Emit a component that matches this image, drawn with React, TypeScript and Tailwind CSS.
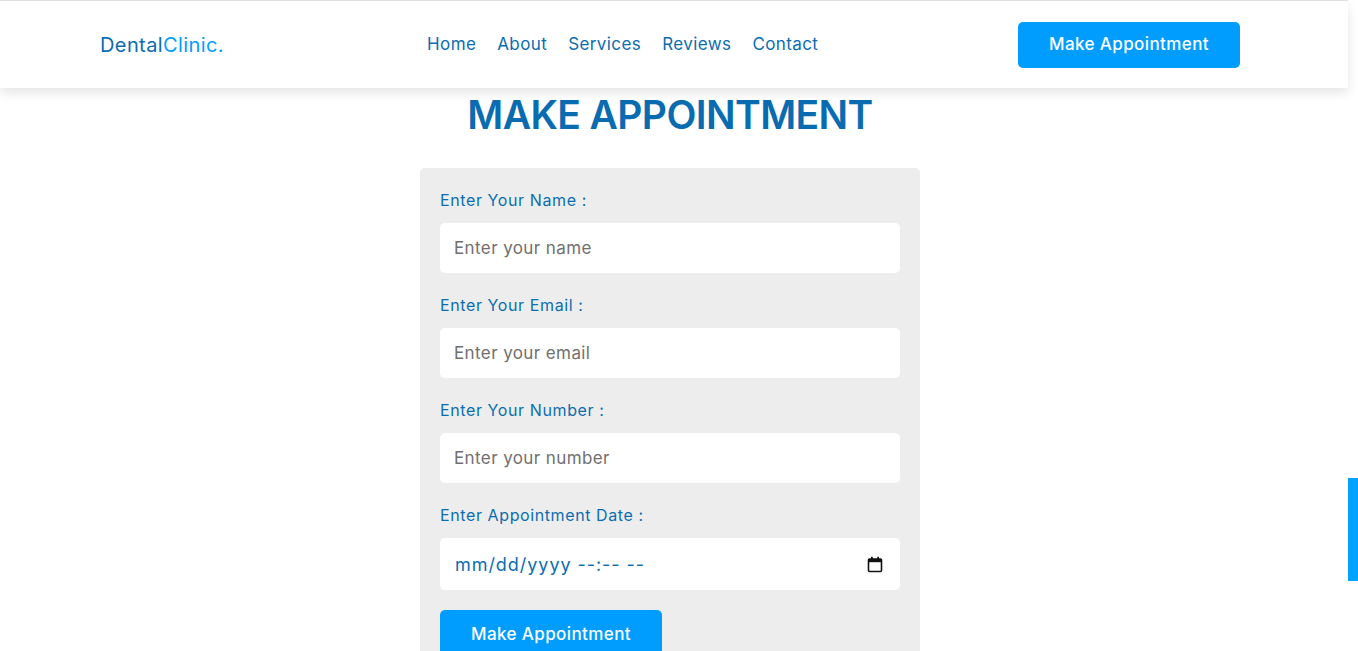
import React from "react";

const font = { fontFamily: '"Inter", "Noto Sans", sans-serif' };

function Field({ label, placeholder, type = "text" }: { label: string; placeholder: string; type?: string }) {
  return (
    <div className="flex shrink-0 flex-col">
      <label className="text-[16px] leading-[24px] tracking-[0.6px] text-[#0b6db0]">{label}</label>
      <input
        type={type}
        placeholder={placeholder}
        className="mt-[11px] h-[50px] w-full rounded-[5px] bg-white px-[14px] text-[17px] tracking-[0.4px] text-[#0b6db0] outline-none placeholder:text-[#707070]"
      />
    </div>
  );
}

function CalendarIcon() {
  return (
    <svg width="16" height="17" viewBox="0 0 16 17" fill="none" className="shrink-0">
      <rect x="1.5" y="3" width="13" height="12.5" rx="1" stroke="#111" strokeWidth="1.6" />
      <rect x="1.5" y="3" width="13" height="3.2" fill="#111" />
      <rect x="4" y="0.8" width="1.8" height="3" fill="#111" />
      <rect x="10.2" y="0.8" width="1.8" height="3" fill="#111" />
    </svg>
  );
}

export default function App() {
  return (
    <div className="flex h-[651px] w-full overflow-hidden bg-white" style={font}>
      <div className="flex min-w-0 flex-1 flex-col">
        <div className="h-[2px] shrink-0 border-t border-[#e3e3e3]" />
        <header className="relative z-10 flex h-[86px] shrink-0 items-center bg-white pl-[100px] pr-[108px] shadow-[0_5px_10px_rgba(0,0,0,0.1)]">
          <div className="w-[327px] shrink-0 text-[20px] tracking-[0.4px] text-[#0b6db0]">
            Dental<span className="text-[#00a0ff]">Clinic.</span>
          </div>
          <nav className="flex gap-[21px] text-[17px] tracking-[0.4px] text-[#0b6db0]">
            <a>Home</a>
            <a>About</a>
            <a>Services</a>
            <a>Reviews</a>
            <a>Contact</a>
          </nav>
          <button className="ml-auto h-[46px] w-[222px] rounded-[5px] bg-[#009dff] text-[17px] font-medium tracking-[0.4px] text-white">
            Make Appointment
          </button>
        </header>
        <h1 className="shrink-0 -translate-x-[4px] text-center text-[39px] font-semibold leading-[54px] tracking-[-0.6px] text-[#0a6cb0]">
          MAKE APPOINTMENT
        </h1>
        <div className="flex shrink-0 justify-center pt-[26px]">
          <form className="flex w-[500px] -translate-x-[4px] flex-col gap-[20px] rounded-t-[5px] bg-[#ededed] px-[20px] pt-[20px] pb-[20px]">
            <Field label="Enter Your Name :" placeholder="Enter your name" />
            <Field label="Enter Your Email :" placeholder="Enter your email" type="email" />
            <Field label="Enter Your Number :" placeholder="Enter your number" />
            <div className="flex shrink-0 flex-col">
              <label className="text-[16px] leading-[24px] tracking-[0.6px] text-[#0b6db0]">Enter Appointment Date :</label>
              <div className="mt-[11px] flex h-[52px] w-full items-center justify-between rounded-[5px] bg-white pl-[15px] pr-[17px]">
                <span className="text-[18px] tracking-[0.95px] text-[#0b6db0]">mm/dd/yyyy --:-- --</span>
                <CalendarIcon />
              </div>
            </div>
            <button type="button" className="h-[50px] w-[222px] shrink-0 rounded-[5px] bg-[#009dff] text-[17px] font-medium tracking-[0.4px] text-white">
              Make Appointment
            </button>
          </form>
        </div>
      </div>
      <div className="flex w-[10px] shrink-0 flex-col">
        <div className="h-[478px] shrink-0" />
        <div className="h-[103px] shrink-0 bg-[#00a3ff]" />
      </div>
    </div>
  );
}
